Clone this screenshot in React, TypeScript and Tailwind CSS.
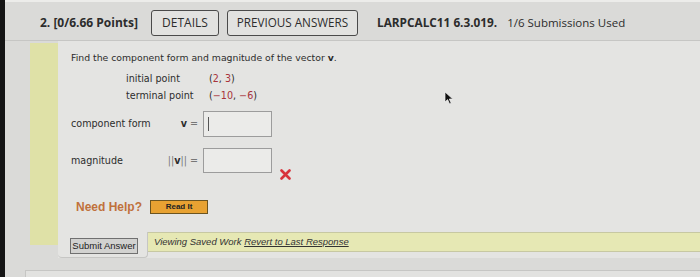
import React from "react";

const body = { fontFamily: '"DejaVu Sans", Verdana, sans-serif' };
const head = { fontFamily: '"Open Sans", "Liberation Sans", sans-serif' };
const arial = { fontFamily: '"Liberation Sans", Arial, sans-serif' };

function RedX() {
  return (
    <svg width="11" height="11" viewBox="0 0 11 11" className="block">
      <path d="M1.5 1.5 L9.5 9.5 M9.5 1.5 L1.5 9.5" stroke="#d8343c" strokeWidth="2.6" strokeLinecap="round" />
    </svg>
  );
}

function Pointer() {
  return (
    <svg width="10" height="14" viewBox="0 0 10 14" className="absolute left-[444px] top-[91px]">
      <path d="M1 1 L1 11 L3.6 8.6 L5.6 13 L7.2 12.2 L5.3 8 L8.8 8 Z" fill="#111" stroke="#f2f2f2" strokeWidth="0.7" />
    </svg>
  );
}

export default function App() {
  return (
    <div className="relative flex h-[277px] w-[700px] overflow-hidden bg-[#dadad8] text-[#2c2c2c]">
      <div className="w-[5px] shrink-0 bg-[#141414]" />
      <div className="flex flex-1 flex-col">
        <header className="flex h-[41px] shrink-0 items-center whitespace-nowrap border-b border-t-2 border-b-[#c6c6c4] border-t-[#ececea] pt-[4px] pl-[35px]" style={head}>
          <span className="text-[12px] font-bold">2. [0/6.66 Points]</span>
          <span className="ml-[13px] flex h-[26px] w-[68px] items-center justify-center rounded-[3px] border-[1.5px] border-[#4a4a4a] bg-[#e2e2e0] text-[12px]">DETAILS</span>
          <span className="ml-[8px] flex h-[26px] w-[131px] items-center justify-center rounded-[3px] border-[1.5px] border-[#4a4a4a] bg-[#e2e2e0] text-[11.7px]">PREVIOUS ANSWERS</span>
          <span className="ml-[19px] text-[11.8px] font-bold">LARPCALC11 6.3.019.</span>
          <span className="ml-[10px] text-[11.5px]">1/6 Submissions Used</span>
        </header>

        <div className="ml-[25px] flex h-[217px]">
          <div className="mt-[2px] h-[202px] w-[28px] shrink-0 bg-[#dfe1a7]" />
          <div className="flex flex-1 flex-col bg-[#e4e4e2]" style={body}>
            <p className="pl-[13px] pt-[10px] text-[9.3px] leading-[14px]">
              Find the component form and magnitude of the vector <b>v</b>.
            </p>
            <div className="mt-[5px] grid grid-cols-[83px_auto] pl-[68px] text-[9.6px] leading-[17px]">
              <span>initial point</span>
              <span>
                (<span className="text-[#a8323a]">2</span>, <span className="text-[#a8323a]">3</span>)
              </span>
              <span>terminal point</span>
              <span>
                (<span className="text-[#a8323a]">−10</span>, <span className="text-[#a8323a]">−6</span>)
              </span>
            </div>

            <div className="mt-[7px] flex items-center pl-[13px] text-[9.6px]">
              <span className="w-[107px]">component form</span>
              <span className="w-[20px] text-right">
                <b>v</b> <span className="text-[#777]">=</span>
              </span>
              <span className="ml-[5px] flex h-[26px] w-[69px] items-center border border-[#9c9c9c] bg-[#ebebe9] pl-[4px]">
                <span className="h-[14px] w-px bg-[#555]" />
              </span>
            </div>

            <div className="mt-[11px] flex items-start pl-[13px] text-[9.6px]">
              <span className="mt-[6px] w-[95px]">magnitude</span>
              <span className="mt-[6px] w-[32px] text-right">
                <span className="text-[#777]">||</span><b>v</b><span className="text-[#777]">||</span> <span className="text-[#777]">=</span>
              </span>
              <span className="ml-[5px] h-[25px] w-[69px] border border-[#9c9c9c] bg-[#ebebe9]" />
              <span className="ml-[8px] mt-[21px]">
                <RedX />
              </span>
            </div>

            <div className="mt-[18px] flex items-center pl-[18px]">
              <span className="text-[12px] font-bold text-[#c0713c]" style={arial}>Need Help?</span>
              <span className="ml-[8px] flex h-[14px] w-[58px] items-center justify-center border border-[#6b5420] bg-[#e8a232] text-[8px] font-bold text-[#222]" style={arial}>Read It</span>
            </div>

            <div className="mt-[16px] flex">
              <div className="h-[26px] w-[90px] shrink-0 rounded-bl-[4px] rounded-br-[4px] border-b border-r border-[#c6c6c4] pl-[12px] pt-[6px]">
                <span className="flex h-[16px] w-[68px] items-center justify-center whitespace-nowrap border border-[#707070] bg-[#d2d2d0] text-[9.5px] text-[#222]" style={arial}>Submit Answer</span>
              </div>
              <div className="flex h-[20px] flex-1 items-center whitespace-nowrap border-y border-[#c7c8a2] bg-[#e6e8b4] pl-[6px] text-[9.5px] italic text-[#333]" style={arial}>
                Viewing Saved Work&nbsp;<span className="underline">Revert to Last Response</span>
              </div>
            </div>
          </div>
        </div>

        <div className="ml-[20px] mt-[12px] flex-1 border-l border-t border-[#c6c6c4] bg-[#e2e2e0]" />
      </div>
      <Pointer />
    </div>
  );
}
